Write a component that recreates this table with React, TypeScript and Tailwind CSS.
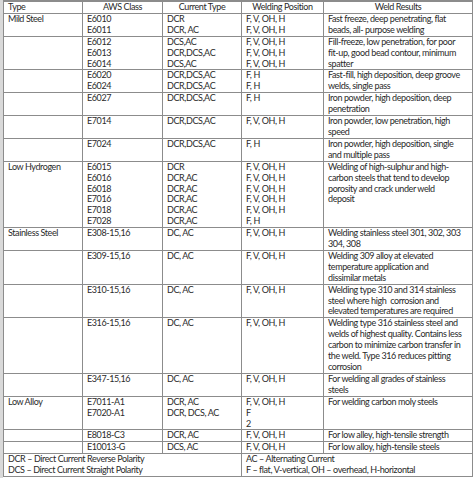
const rows = [
  {
    type: 'Mild Steel',
    aws: ['E6010', 'E6011'],
    current: ['DCR', 'DCR, AC'],
    position: ['F, V, OH, H', 'F, V, OH, H'],
    results: ['Fast freeze, deep penetrating, flat', 'beads, all- purpose welding'],
  },
  {
    type: '',
    aws: ['E6012', 'E6013', 'E6014'],
    current: ['DCS,AC', 'DCR,DCS,AC', 'DCS,AC'],
    position: ['F, V, OH, H', 'F, V, OH, H', 'F, V, OH, H'],
    results: ['Fill-freeze, low penetration, for poor', 'fit-up, good bead contour, minimum', 'spatter'],
  },
  {
    type: '',
    aws: ['E6020', 'E6024'],
    current: ['DCR,DCS,AC', 'DCR,DCS,AC'],
    position: ['F, H', 'F, H'],
    results: ['Fast-fill, high deposition, deep groove', 'welds, single pass'],
  },
  {
    type: '',
    aws: ['E6027'],
    current: ['DCR,DCS,AC'],
    position: ['F, H'],
    results: ['Iron powder, high deposition, deep', 'penetration'],
  },
  {
    type: '',
    aws: ['E7014'],
    current: ['DCR,DCS,AC'],
    position: ['F, V, OH, H'],
    results: ['Iron powder, low penetration, high', 'speed'],
  },
  {
    type: '',
    aws: ['E7024'],
    current: ['DCR,DCS,AC'],
    position: ['F, H'],
    results: ['Iron powder, high deposition, single', 'and multiple pass'],
  },
  {
    type: 'Low Hydrogen',
    aws: ['E6015', 'E6016', 'E6018', 'E7016', 'E7018', 'E7028'],
    current: ['DCR', 'DCR,AC', 'DCR,AC', 'DCR,AC', 'DCR,AC', 'DCR,AC'],
    position: ['F, V, OH, H', 'F, V, OH, H', 'F, V, OH, H', 'F, V, OH, H', 'F, V, OH, H', 'F, H'],
    results: [
      'Welding of high-sulphur and high-',
      'carbon steels that tend to develop',
      'porosity and crack under weld',
      'deposit',
    ],
  },
  {
    type: 'Stainless Steel',
    aws: ['E308-15,16'],
    current: ['DC, AC'],
    position: ['F, V, OH, H'],
    results: ['Welding stainless steel 301, 302, 303', '304, 308'],
  },
  {
    type: '',
    aws: ['E309-15,16'],
    current: ['DC, AC'],
    position: ['F, V, OH, H'],
    results: ['Welding 309 alloy at elevated', 'temperature application and', 'dissimilar metals'],
  },
  {
    type: '',
    aws: ['E310-15,16'],
    current: ['DC, AC'],
    position: ['F, V, OH, H'],
    results: [
      'Welding type 310 and 314 stainless',
      'steel where high  corrosion and',
      'elevated temperatures are required',
    ],
  },
  {
    type: '',
    aws: ['E316-15,16'],
    current: ['DC, AC'],
    position: ['F, V, OH, H'],
    results: [
      'Welding type 316 stainless steel and',
      'welds of highest quality. Contains less',
      'carbon to minimize carbon transfer in',
      'the weld. Type 316 reduces pitting',
      'corrosion',
    ],
  },
  {
    type: '',
    aws: ['E347-15,16'],
    current: ['DC, AC'],
    position: ['F, V, OH, H'],
    results: ['For welding all grades of stainless', 'steels'],
  },
  {
    type: 'Low Alloy',
    aws: ['E7011-A1', 'E7020-A1'],
    current: ['DCR, AC', 'DCR, DCS, AC'],
    position: ['F, V, OH, H', 'F', '2'],
    results: ['For welding carbon moly steels'],
  },
  {
    type: '',
    aws: ['E8018-C3'],
    current: ['DCR, AC'],
    position: ['F, V, OH, H'],
    results: ['For low alley, high-tensile strength'],
  },
  {
    type: '',
    aws: ['E10013-G'],
    current: ['DCS, AC'],
    position: ['F, V, OH, H'],
    results: ['For low alloy, high-tensile steels'],
  },
];

function Lines({ items }: { items: string[] }) {
  return (
    <>
      {items.map((line, i) => (
        <div key={i} className="whitespace-pre">
          {line}
        </div>
      ))}
    </>
  );
}

const cell = 'border border-[#8c8c8c] px-[4px] py-0 align-top text-left';

export default function App() {
  return (
    <div className="flex w-[474px] h-[494px] bg-white items-start">
      <div className="w-[3px] h-[478px] bg-[#d9d9d9]" />
      <table
        className="table-fixed border-collapse w-[469px] text-[9px] tracking-[-0.4px] leading-[10.9px] text-[#2a2a2a] border-t-2 border-[#8c8c8c]"
        style={{ fontFamily: 'Lato, "Open Sans", sans-serif' }}
      >
        <colgroup>
          <col className="w-[79px]" />
          <col className="w-[80px]" />
          <col className="w-[79px]" />
          <col className="w-[82px]" />
          <col className="w-[149px]" />
        </colgroup>
        <thead>
          <tr>
            <th className={`${cell} font-normal`}>Type</th>
            <th className={`${cell} font-normal !text-center`}>AWS Class</th>
            <th className={`${cell} font-normal !text-center`}>Current Type</th>
            <th className={`${cell} font-normal !text-center`}>Welding Position</th>
            <th className={`${cell} font-normal !text-center`}>Weld Results</th>
          </tr>
        </thead>
        <tbody>
          {rows.map((row, i) => (
            <tr key={i}>
              <td className={cell}>{row.type}</td>
              <td className={cell}>
                <Lines items={row.aws} />
              </td>
              <td className={cell}>
                <Lines items={row.current} />
              </td>
              <td className={cell}>
                <Lines items={row.position} />
              </td>
              <td className={cell}>
                <Lines items={row.results} />
              </td>
            </tr>
          ))}
          {/* Legend */}
          <tr>
            <td colSpan={3} className={cell}>
              <Lines
                items={['DCR – Direct Current Reverse Polarity', 'DCS – Direct Current Straight Polarity']}
              />
            </td>
            <td colSpan={2} className={cell}>
              <Lines
                items={['AC – Alternating Current', 'F – flat, V-vertical, OH – overhead, H-horizontal']}
              />
            </td>
          </tr>
        </tbody>
      </table>
    </div>
  );
}
